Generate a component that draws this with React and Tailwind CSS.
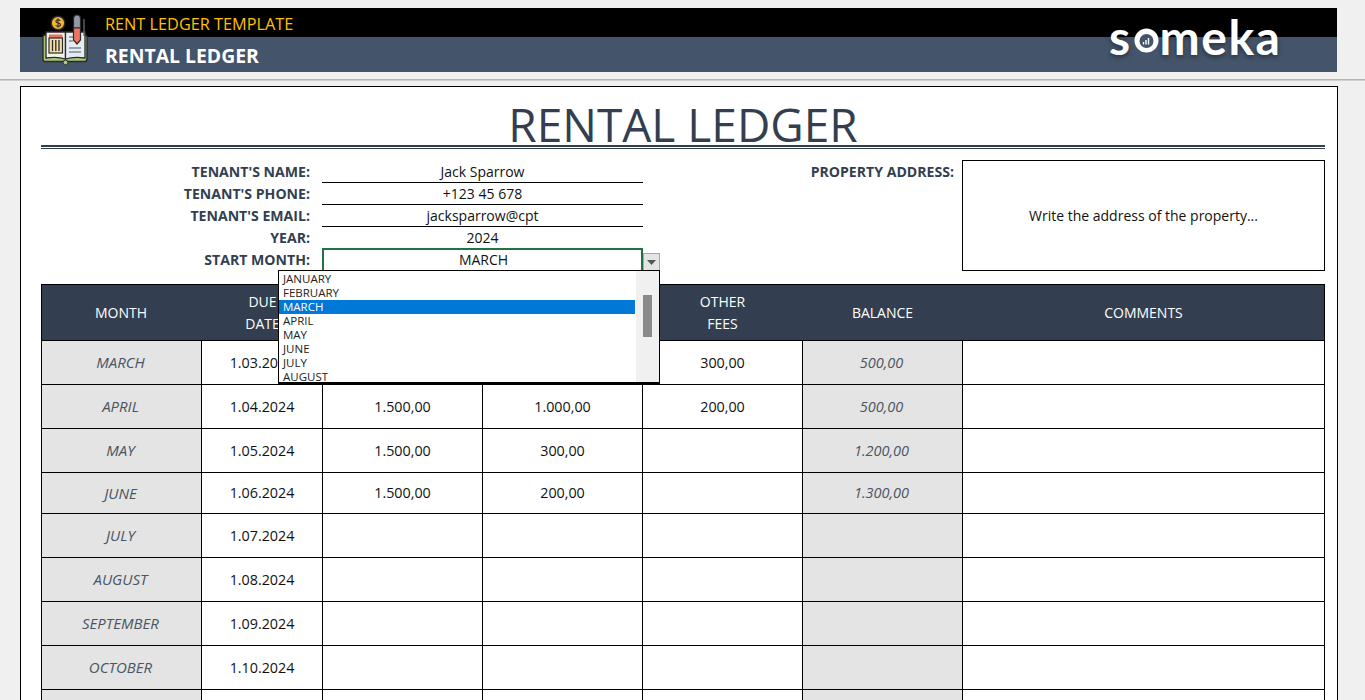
const font = "font-['Open_Sans','Noto_Sans',sans-serif]";

function BookIcon() {
  return (
    <svg width="52" height="54" viewBox="0 0 52 54" className="absolute left-[40px] top-[13px]">
      <path d="M3 24q0-2 2-2h3v22h34v-22h3q2 0 2 2v22q0 2.500-2.500 2.500h-39q-2.500 0-2.500-2.500z" fill="#a4c77a" stroke="#2b2b2b" strokeWidth="1.4" />
      <circle cx="25.500" cy="49.500" r="2.500" fill="#a4c77a" stroke="#2b2b2b" strokeWidth="1" />
      <path d="M6 19h19.500v27q-8-2.500-19.500-1z" fill="#f5f3e8" stroke="#2b2b2b" strokeWidth="1.300" />
      <path d="M45 19h-19.500v27q8-2.500 19.500-1z" fill="#e6edf2" stroke="#2b2b2b" strokeWidth="1.300" />
      <rect x="9" y="21.500" width="13.500" height="3.500" fill="#e8735f" />
      <rect x="9" y="25" width="13.500" height="15" fill="#f2dda4" stroke="#2b2b2b" strokeWidth="1.200" />
      <path d="M12.500 27v11M15.800 27v11M19 27v11" stroke="#2b2b2b" strokeWidth="1.300" />
      <path d="M29 35h12M29 39h12M29 24h4M29 28h4" stroke="#7d8994" strokeWidth="1.500" />
      <circle cx="18" cy="10" r="6.800" fill="#f2b632" stroke="#2b2b2b" strokeWidth="1.400" />
      <path d="M20.300 7.800q-1-1-2.400-1-2 0-2 1.500 0 1.500 2.200 1.700 2.400.3 2.400 1.800 0 1.500-2.300 1.500-1.500 0-2.600-1M18 5.200v9.600" fill="none" stroke="#2b2b2b" strokeWidth="1.100" />
      <path d="M33.500 6q0-4 3.500-4t3.500 4v9h-7z" fill="#8f9aa6" stroke="#2b2b2b" strokeWidth="1.200" />
      <path d="M33.500 15h7v12l-3.500 4-3.500-4z" fill="#ee7562" stroke="#2b2b2b" strokeWidth="1.200" />
      <path d="M44 6v17" stroke="#5a6672" strokeWidth="1.400" />
    </svg>
  );
}

function Someka() {
  return (
    <div className="absolute left-[1109px] top-[11px] flex items-center h-[52px] text-white font-['Lato','Open_Sans',sans-serif] font-bold text-[48px] leading-none tracking-[1.5px] [text-shadow:0_2px_5px_rgba(0,0,0,0.45)]">
      <span>s</span>
      <svg width="25" height="25" viewBox="0 0 25 25" className="ml-[2px] mr-[1px] mt-[7px]">
        <circle cx="12.5" cy="12.5" r="12" fill="#ffffff" />
        <circle cx="12.5" cy="13" r="7" fill="#44546a" />
        <path d="M9.500 16.500v-2.500M12 16.500v-4.500M14.500 16.500v-6.500" stroke="#ffffff" strokeWidth="1.400" />
      </svg>
      <span>meka</span>
    </div>
  );
}

function FormRow({ label, value, underline = true }) {
  return (
    <div className="flex h-[22px]">
      <div className="w-[269px] shrink-0 text-right font-bold text-[#333f50] text-[14.1px] leading-[22px] whitespace-nowrap">{label}</div>
      <div className={`ml-[12px] w-[321px] shrink-0 text-center text-[14px] leading-[22px] text-[#111] ${underline ? 'border-b border-black' : ''}`}>{value}</div>
    </div>
  );
}

const COLS = "grid grid-cols-[160px_121px_160px_160px_160px_160px_1fr]";
const rows = [
  ['MARCH', '1.03.2024', '', '', '300,00', '500,00', 44],
  ['APRIL', '1.04.2024', '1.500,00', '1.000,00', '200,00', '500,00', 44],
  ['MAY', '1.05.2024', '1.500,00', '300,00', '', '1.200,00', 44],
  ['JUNE', '1.06.2024', '1.500,00', '200,00', '', '1.300,00', 41],
  ['JULY', '1.07.2024', '', '', '', '', 44],
  ['AUGUST', '1.08.2024', '', '', '', '', 44],
  ['SEPTEMBER', '1.09.2024', '', '', '', '', 44],
  ['OCTOBER', '1.10.2024', '', '', '', '', 44],
  ['', '', '', '', '', '', 44],
];

function Row({ r }) {
  const cell = "flex items-center justify-center border-r border-black text-[14.3px] text-[#111]";
  const grey = "flex items-center justify-center border-r border-black pr-[2px] italic text-[#4a5563] bg-[#e4e4e4]";
  const h = r[6] === 41 ? 'h-[41px]' : 'h-[44px]';
  return (
    <div className={`${COLS} ${h} border-b border-black border-l`}>
      <div className={`${grey} text-[15px]`}>{r[0]}</div>
      <div className={cell}>{r[1]}</div>
      <div className={cell}>{r[2]}</div>
      <div className={cell}>{r[3]}</div>
      <div className={cell}>{r[4]}</div>
      <div className={`${grey} text-[14.5px]`}>{r[5]}</div>
      <div className={cell}></div>
    </div>
  );
}

function Dropdown() {
  const months = ['JANUARY', 'FEBRUARY', 'MARCH', 'APRIL', 'MAY', 'JUNE', 'JULY', 'AUGUST'];
  return (
    <div className="absolute left-[278px] top-[270px] w-[382px] h-[114px] bg-white border border-black border-b-2 flex z-10">
      <div className="flex-1 pr-[1px] pt-[1px]">
        {months.map((m) => (
          <div key={m} className={`h-[14px] w-[356px] pl-[4px] text-[11.5px] leading-[14px] ${m === 'MARCH' ? 'bg-[#0078d7] text-white' : 'text-[#222]'}`}>{m}</div>
        ))}
      </div>
      <div className="w-[23px] bg-[#f0f0f0] pt-[24px] flex justify-center">
        <div className="w-[9px] h-[42px] bg-[#8a8a8a]" />
      </div>
    </div>
  );
}

export default function App() {
  return (
    <div className={`relative h-[700px] overflow-hidden bg-[#f0f0f0] pt-[8px] ${font}`}>
      <div className="mx-[20px] w-[1317px] h-[64px] flex flex-col">
        <div className="h-[29px] bg-black pl-[85px] text-[#ffc000] text-[16.3px] leading-[32px]">RENT LEDGER TEMPLATE</div>
        <div className="h-[35px] bg-[#44546a] pl-[85px] text-white font-bold text-[19.4px] leading-[37px]">RENTAL LEDGER</div>
      </div>
      <BookIcon />
      <Someka />
      <div className="mt-[7px] border-t border-b border-t-[#b5b5b5] border-b-[#d0d0d0] h-[2px]" />
      <div className="mx-[20px] mt-[5px] w-[1318px] h-[700px] bg-white border border-black pl-[20px] pr-[12px]">
        <div className="text-center text-[46px] leading-[42px] pt-[16px] text-[#333f50] h-[58px]">RENTAL LEDGER</div>
        <div className="h-[4px] border-t-2 border-b border-t-[#333f50] border-b-[#333f50]" />
        <div className="flex mt-[11px]">
          <div className="w-[601px] shrink-0 pt-[1px]">
            <FormRow label="TENANT'S NAME:" value="Jack Sparrow" />
            <FormRow label="TENANT'S PHONE:" value="+123 45 678" />
            <FormRow label="TENANT'S EMAIL:" value="jacksparrow@cpt" />
            <FormRow label="YEAR:" value="2024" underline={false} />
            <div className="flex h-[22px]">
              <div className="w-[269px] shrink-0 text-right font-bold text-[#333f50] text-[14.1px] leading-[22px]">START MONTH:</div>
              <div className="ml-[12px] -mt-[1px] h-[23px] w-[321px] shrink-0 border-2 border-[#217346] border-b-0 pl-[2px] text-center text-[14px] leading-[20px] text-[#111]">MARCH</div>
              <div className="mt-[4px] w-[17px] h-[18px] shrink-0 bg-[#e4e4e4] border border-[#a8a8a8] flex items-center justify-center">
                <svg width="9" height="5" viewBox="0 0 9 5"><path d="M0 0h9L4.500 5z" fill="#555" /></svg>
              </div>
            </div>
          </div>
          <div className="w-[320px] shrink-0 pt-[1px] text-right font-bold text-[#333f50] text-[14.1px] leading-[22px] pr-[8px]">PROPERTY ADDRESS:</div>
          <div className="flex-1 h-[111px] border border-black flex items-center justify-center text-[14px] text-[#111]">Write the address of the property...</div>
        </div>
        <div className="mt-[13px]">
          <div className={`${COLS} h-[57px] bg-[#333f50] border border-black text-white text-[14px] text-center`}>
            <div className="flex items-center justify-center pr-[2px]">MONTH</div>
            <div className="flex items-center justify-center leading-[22px]">DUE<br />DATE</div>
            <div />
            <div />
            <div className="flex items-center justify-center pr-[1px] leading-[22px]">OTHER<br />FEES</div>
            <div className="flex items-center justify-center pr-[1px]">BALANCE</div>
            <div className="flex items-center justify-center">COMMENTS</div>
          </div>
          {rows.map((r, i) => <Row key={i} r={r} />)}
        </div>
      </div>
      <Dropdown />
    </div>
  );
}
